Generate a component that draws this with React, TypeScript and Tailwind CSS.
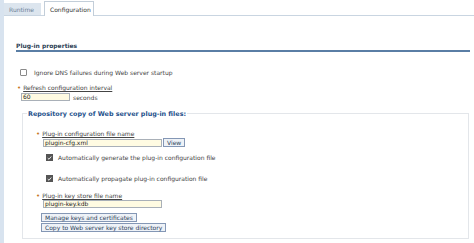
import React from 'react';

const Req = () => <span className="text-[#c7781f] text-[7px] leading-none mr-[2px]">•</span>;

const Check = ({ checked }: { checked?: boolean }) => (
  <span
    className={`inline-flex w-[7px] h-[7px] shrink-0 items-center justify-center border ${
      checked ? 'border-[#555] bg-[#555]' : 'border-[#8a8a8a] bg-white rounded-[1px]'
    }`}
  >
    {checked && (
      <svg viewBox="0 0 8 8" className="w-[6px] h-[6px]">
        <path d="M1.2 4.2 L3.2 6 L6.8 1.6" fill="none" stroke="#fff" strokeWidth="1.4" />
      </svg>
    )}
  </span>
);

const Field = ({ value, w }: { value: string; w: string }) => (
  <div className={`${w} h-[8px] border border-[#a9b0b8] bg-[#fffbe2] leading-[6px] pl-[1px] text-[#222]`}>
    {value}
  </div>
);

const Btn = ({ label }: { label: string }) => (
  <div className="inline-block h-[9px] border border-[#8497b5] bg-[#eef2f7] px-[3px] leading-[7px] text-[#2c3e5a]">
    {label}
  </div>
);

const App = () => {
  return (
    <div className="w-[474px] h-[243px] bg-white flex overflow-hidden font-['DejaVu_Sans',sans-serif] text-[#444] text-[6px] leading-[7px]">
      <div className="w-[4px] bg-[#d8e3ef]" />
      <div className="flex-1 flex flex-col">
        {/* tabs */}
        <div className="flex items-end pt-[2px] border-b border-[#c9d5e1] h-[16px] mb-[1px]">
          <div className="h-[12px] w-[37px] bg-[#dce5ee] text-[#6b7f98] flex items-center pl-[5px]">
            Runtime
          </div>
          <div className="ml-[3px] h-[15px] w-[50px] bg-white border border-b-0 border-[#c3ced9] -mb-px flex items-center pl-[5px] text-[#333]">
            Configuration
          </div>
        </div>

        {/* plug-in properties */}
        <div className="pl-[12px] pr-[4px] pt-[25px]">
          <div className="font-bold text-[#2d3f55]">Plug-in properties</div>
          <div className="h-[2px] bg-[#5a7ea5] mt-[1px]" />
        </div>

        <div className="pl-[16px] pt-[17px] flex items-center gap-[7px]">
          <Check />
          <span>Ignore DNS failures during Web server startup</span>
        </div>

        <div className="pl-[13px] pt-[8px]">
          <Req />
          <span className="underline">Refresh configuration interval</span>
        </div>
        <div className="pl-[17px] pt-[1px] flex items-center gap-[3px]">
          <Field value="60" w="w-[49px]" />
          <span>seconds</span>
        </div>

        {/* fieldset */}
        <div className="ml-[18px] mr-[5px] mt-[12px] h-[126px] border border-[#e3e6ea] relative">
          <div className="absolute -top-[4px] left-[4px] bg-white px-[1px] font-bold text-[6.4px] text-[#24508b] leading-[8px]">
            Repository copy of Web server plug-in files:
          </div>
          <div className="pl-[13px] pt-[16px]">
            <div>
              <Req />
              <span className="underline">Plug-in configuration file name</span>
            </div>
            <div className="pl-[7px] flex items-center gap-[1px]">
              <Field value="plugin-cfg.xml" w="w-[119px]" />
              <Btn label="View" />
            </div>
            <div className="pl-[10px] pt-[7px] flex items-center gap-[5px]">
              <Check checked />
              <span>Automatically generate the plug-in configuration file</span>
            </div>
            <div className="pl-[10px] pt-[14px] flex items-center gap-[5px]">
              <Check checked />
              <span>Automatically propagate plug-in configuration file</span>
            </div>
            <div className="pt-[10px]">
              <Req />
              <span className="underline">Plug-in key store file name</span>
            </div>
            <div className="pl-[7px]">
              <Field value="plugin-key.kdb" w="w-[119px]" />
            </div>
            <div className="pl-[5px] pt-[5px] flex flex-col items-start gap-[1px]">
              <Btn label="Manage keys and certificates" />
              <Btn label="Copy to Web server key store directory" />
            </div>
          </div>
        </div>
      </div>
    </div>
  );
};

export default App;
